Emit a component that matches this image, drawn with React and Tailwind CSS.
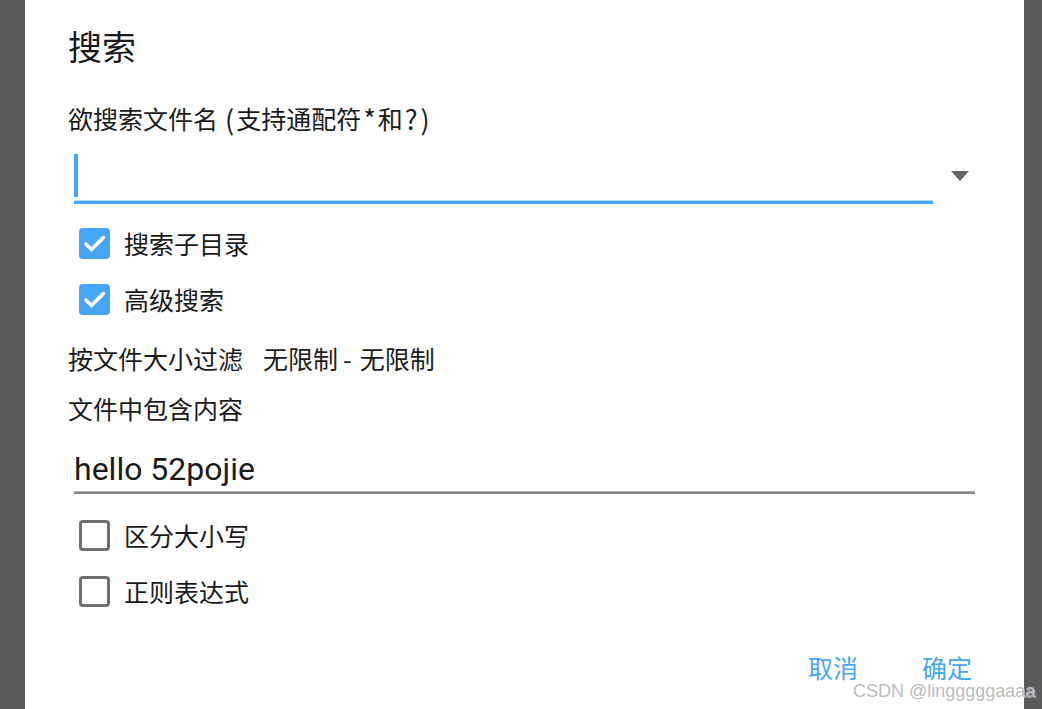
import React, { useState } from 'react';

const font = { fontFamily: '"Noto Sans CJK SC", Roboto, sans-serif' };

const Check = ({ checked, label, onToggle }) => (
  <div className="flex items-center h-[31px] pl-[11px] cursor-pointer" onClick={onToggle}>
    {checked ? (
      <div className="w-[31px] h-[31px] rounded-[4px] bg-[#45a7f5] flex items-center justify-center">
        <svg width="27" height="27" viewBox="0 0 24 24" fill="none">
          <path d="M4.5 12.5l4.8 4.8L19.8 6.8" stroke="#fff" strokeWidth="3.3" strokeLinecap="round" strokeLinejoin="round" />
        </svg>
      </div>
    ) : (
      <div className="w-[31px] h-[31px] rounded-[4px] border-[3px] border-[#6e6e6e] box-border" />
    )}
    <span className="ml-[14px] text-[25px] leading-[31px] text-[#1a1a1a]">{label}</span>
  </div>
);

export default function App() {
  const [subdirs, setSubdirs] = useState(true);
  const [advanced, setAdvanced] = useState(true);
  const [matchCase, setMatchCase] = useState(false);
  const [regex, setRegex] = useState(false);

  return (
    <div className="relative w-[1042px] h-[709px] overflow-hidden flex bg-[#5b5b5b]" style={font}>
      <div className="w-[25px] shrink-0" />
      <div className="w-[999px] shrink-0 bg-white flex flex-col pl-[43px]">
        <div className="mt-[28px] h-[34px] flex items-center text-[34px] text-[#1a1a1a]">搜索</div>

        <div className="mt-[42px] h-[30px] flex items-center text-[25px] text-[#1a1a1a] whitespace-pre">
          <span>欲搜索文件名</span>
          <span className="ml-[7px] text-[27px]">(</span>
          <span className="ml-[2px]">支持通配符</span>
          <span className="mx-[2px] text-[27px]">*</span>
          <span>和</span>
          <span className="ml-[2px] text-[27px]">?</span>
          <span className="ml-[3px] text-[27px]">)</span>
        </div>

        <div className="mt-[20px] flex items-start pl-[6px]">
          <div className="w-[859px] flex flex-col">
            <div className="w-[4px] h-[43px] bg-[#45a7f5]" />
            <div className="mt-[3px] h-[1px] bg-[#b5dcfb]" />
            <div className="h-[3px] bg-[#45a7f5]" />
          </div>
          <svg className="ml-[18px] mt-[17px]" width="18" height="10" viewBox="0 0 18 10">
            <path d="M0 0h18L9 10z" fill="#666" />
          </svg>
        </div>

        <div className="mt-[24px] flex flex-col gap-[25px]">
          <Check checked={subdirs} label="搜索子目录" onToggle={() => setSubdirs(!subdirs)} />
          <Check checked={advanced} label="高级搜索" onToggle={() => setAdvanced(!advanced)} />
        </div>

        <div className="mt-[29px] h-[30px] flex items-center text-[25px] text-[#1a1a1a]">
          <span>按文件大小过滤</span>
          <span className="ml-[20px]">无限制</span>
          <span className="ml-[5px]">-</span>
          <span className="ml-[8px]">无限制</span>
        </div>

        <div className="mt-[20px] h-[30px] flex items-center text-[25px] text-[#1a1a1a]">文件中包含内容</div>

        <div className="mt-[25px] w-[901px] ml-[6px] flex flex-col">
          <div className="h-[40px] leading-[40px] text-[32px] text-[#1a1a1a]" style={{ fontFamily: 'Roboto, sans-serif' }}>
            hello 52pojie
          </div>
          <div className="mt-[2px] h-[1px] bg-[#b0b0b0]" />
          <div className="h-[2px] bg-[#888]" />
        </div>

        <div className="mt-[26px] flex flex-col gap-[25px]">
          <Check checked={matchCase} label="区分大小写" onToggle={() => setMatchCase(!matchCase)} />
          <Check checked={regex} label="正则表达式" onToggle={() => setRegex(!regex)} />
        </div>

        <div className="mt-[45px] flex justify-end pr-[52px] gap-[64px] text-[25px] text-[#45a7f5] leading-[30px]">
          <button>取消</button>
          <button>确定</button>
        </div>
      </div>
      <div className="flex-1" />

      <div
        className="absolute left-[853px] top-[681px] text-[18px] text-[#bdbdbd] leading-[20px] whitespace-nowrap"
        style={{ fontFamily: '"Liberation Sans", sans-serif', textShadow: '1px 1px 1px rgba(255,255,255,0.6)' }}
      >
        CSDN @lingggggaaaa
      </div>
    </div>
  );
}
